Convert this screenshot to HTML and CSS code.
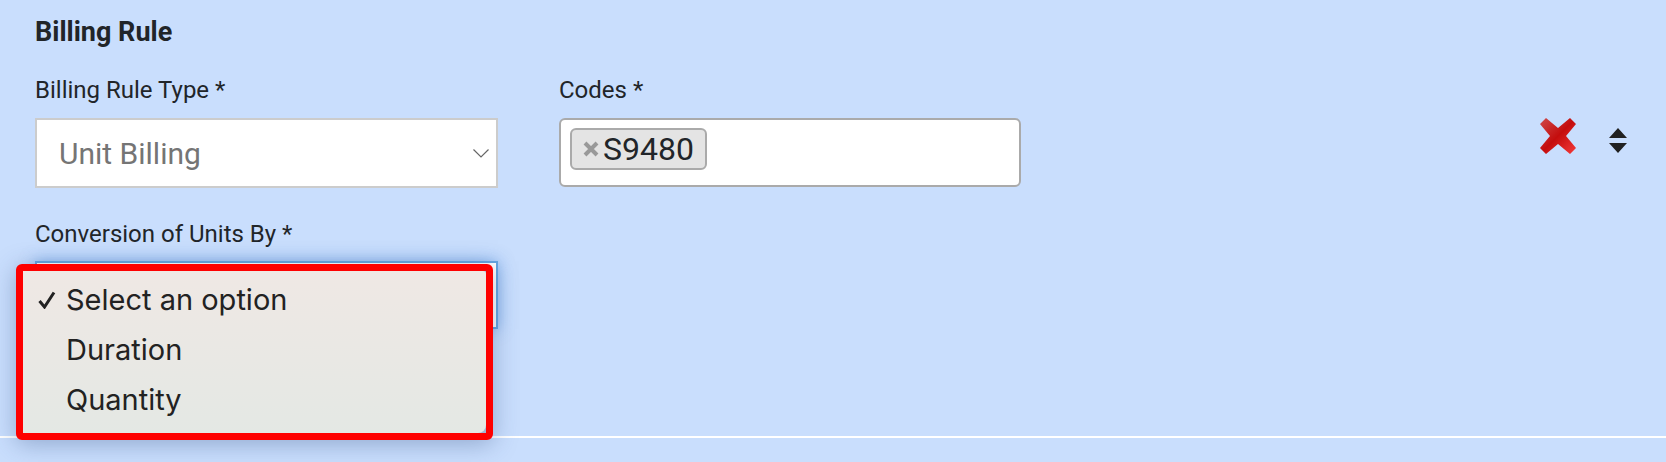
FILE: index.html
```html
<!DOCTYPE html>
<html lang="en">
<head>
  <meta charset="UTF-8">
  <title>Billing Rule</title>
  <link rel="stylesheet" href="styles.css">
</head>
<body>
  <section class="rule">
    <h3>Billing Rule</h3>
    <div class="row">
      <div class="field">
        <label>Billing Rule Type *</label>
        <div class="select">
          <span>Unit Billing</span>
          <svg class="chevron" width="16" height="9" viewBox="0 0 16 9"><path d="M.5.5L8 8 15.500.5" fill="none" stroke="#666" stroke-width="1.2"/></svg>
        </div>
      </div>
      <div class="field codes-field">
        <label>Codes *</label>
        <div class="codes">
          <span class="chip">
            <svg class="chip-x" width="16" height="16" viewBox="0 0 16 16"><path d="M2 2l12 12M14 2L2 14" stroke="#999" stroke-width="4"/></svg>
            S9480
          </span>
        </div>
      </div>
      <div class="actions">
        <svg class="remove" width="38" height="38" viewBox="0 0 38 38">
          <defs>
            <linearGradient id="red" x1="0" y1="0" x2="1" y2="1">
              <stop offset="0" stop-color="#cf4a4a"/>
              <stop offset="0.5" stop-color="#c40d0d"/>
              <stop offset="1" stop-color="#f53a3a"/>
            </linearGradient>
          </defs>
          <path d="M7 1L19 11 31 1l6 6-10 12 10 12-6 6-12-10L7 37l-6-6 10-12L1 7z" fill="url(#red)"/>
        </svg>
        <svg class="sort" width="18" height="25" viewBox="0 0 18 25"><path d="M9 0l9 10H0zM9 25L0 15h18z" fill="#212121"/></svg>
      </div>
    </div>
    <div class="field conversion">
      <label>Conversion of Units By *</label>
      <div class="select focused"></div>
      <div class="menu">
        <div class="menu-list">
          <div class="option"><svg class="check" width="18" height="18" viewBox="0 0 18 18"><path d="M1.500 10l5 6L16 1.500" fill="none" stroke="#222" stroke-width="3"/></svg>Select an option</div>
          <div class="option">Duration</div>
          <div class="option">Quantity</div>
        </div>
      </div>
    </div>
    <hr>
  </section>
</body>
</html>
```

FILE: styles.css
```css
html, body {
  height: 100%;
}
body {
  margin: 0;
  background: #c9defd;
  color: #212529;
  font-family: Roboto, sans-serif;
}
.rule {
  padding-top: 17px;
}
h3 {
  margin: 0 0 0 35px;
  font-size: 27px;
  line-height: 30px;
  font-weight: 700;
}
.row {
  display: flex;
  margin-top: 29px;
  padding-left: 35px;
}
.field {
  width: 463px;
}
label {
  display: block;
  font-size: 24px;
  line-height: 28px;
  margin-bottom: 14px;
}
.select {
  box-sizing: border-box;
  height: 70px;
  background: #fff;
  border: 2px solid #ccc;
  display: flex;
  align-items: center;
  justify-content: space-between;
  padding: 0 7px 0 22px;
  font-size: 30px;
  color: #757575;
}
.focused {
  height: 68px;
  border-color: #66a6e0;
  box-shadow: 0 0 14px rgba(70, 140, 225, 0.55);
}
.codes-field {
  width: 462px;
  margin-left: 61px;
}
.codes {
  box-sizing: border-box;
  height: 69px;
  background: #fff;
  border: 2px solid #aaa;
  border-radius: 6px;
  padding: 8px 9px;
}
.chip {
  display: inline-flex;
  align-items: center;
  box-sizing: border-box;
  height: 42px;
  padding: 0 11px;
  background: #e4e4e4;
  border: 2px solid #aaa;
  border-radius: 6px;
  font-size: 32px;
}
.chip-x {
  margin-right: 4px;
}
.actions {
  margin-left: auto;
  padding: 41px 39px 0 0;
  display: flex;
  align-items: flex-start;
  gap: 32px;
}
.remove {
  filter: blur(0.7px);
}
.sort {
  margin-top: 11px;
}
.conversion {
  position: relative;
  margin: 32px 0 0 35px;
}
.conversion label {
  margin-bottom: 13px;
}
.menu {
  position: absolute;
  left: -19px;
  top: 44px;
  box-sizing: border-box;
  width: 477px;
  height: 176px;
  border: 7px solid #fe0000;
  border-radius: 6px;
  background: #9fb6d4;
  box-shadow: 0 4px 24px rgba(40, 70, 120, 0.35);
}
.menu-list {
  height: 100%;
  box-sizing: border-box;
  padding-top: 4px;
  border-radius: 0 3px 8px 0;
  background: linear-gradient(#efe8e4, #e4e8e4);
  font-family: Inter, sans-serif;
  font-size: 29px;
  color: #222;
}
.option {
  position: relative;
  height: 50px;
  line-height: 50px;
  padding-left: 43px;
}
.check {
  position: absolute;
  left: 15px;
  top: 16px;
}
hr {
  margin: 107px 0 0;
  border: 0;
  height: 2px;
  background: #fff;
}
```
